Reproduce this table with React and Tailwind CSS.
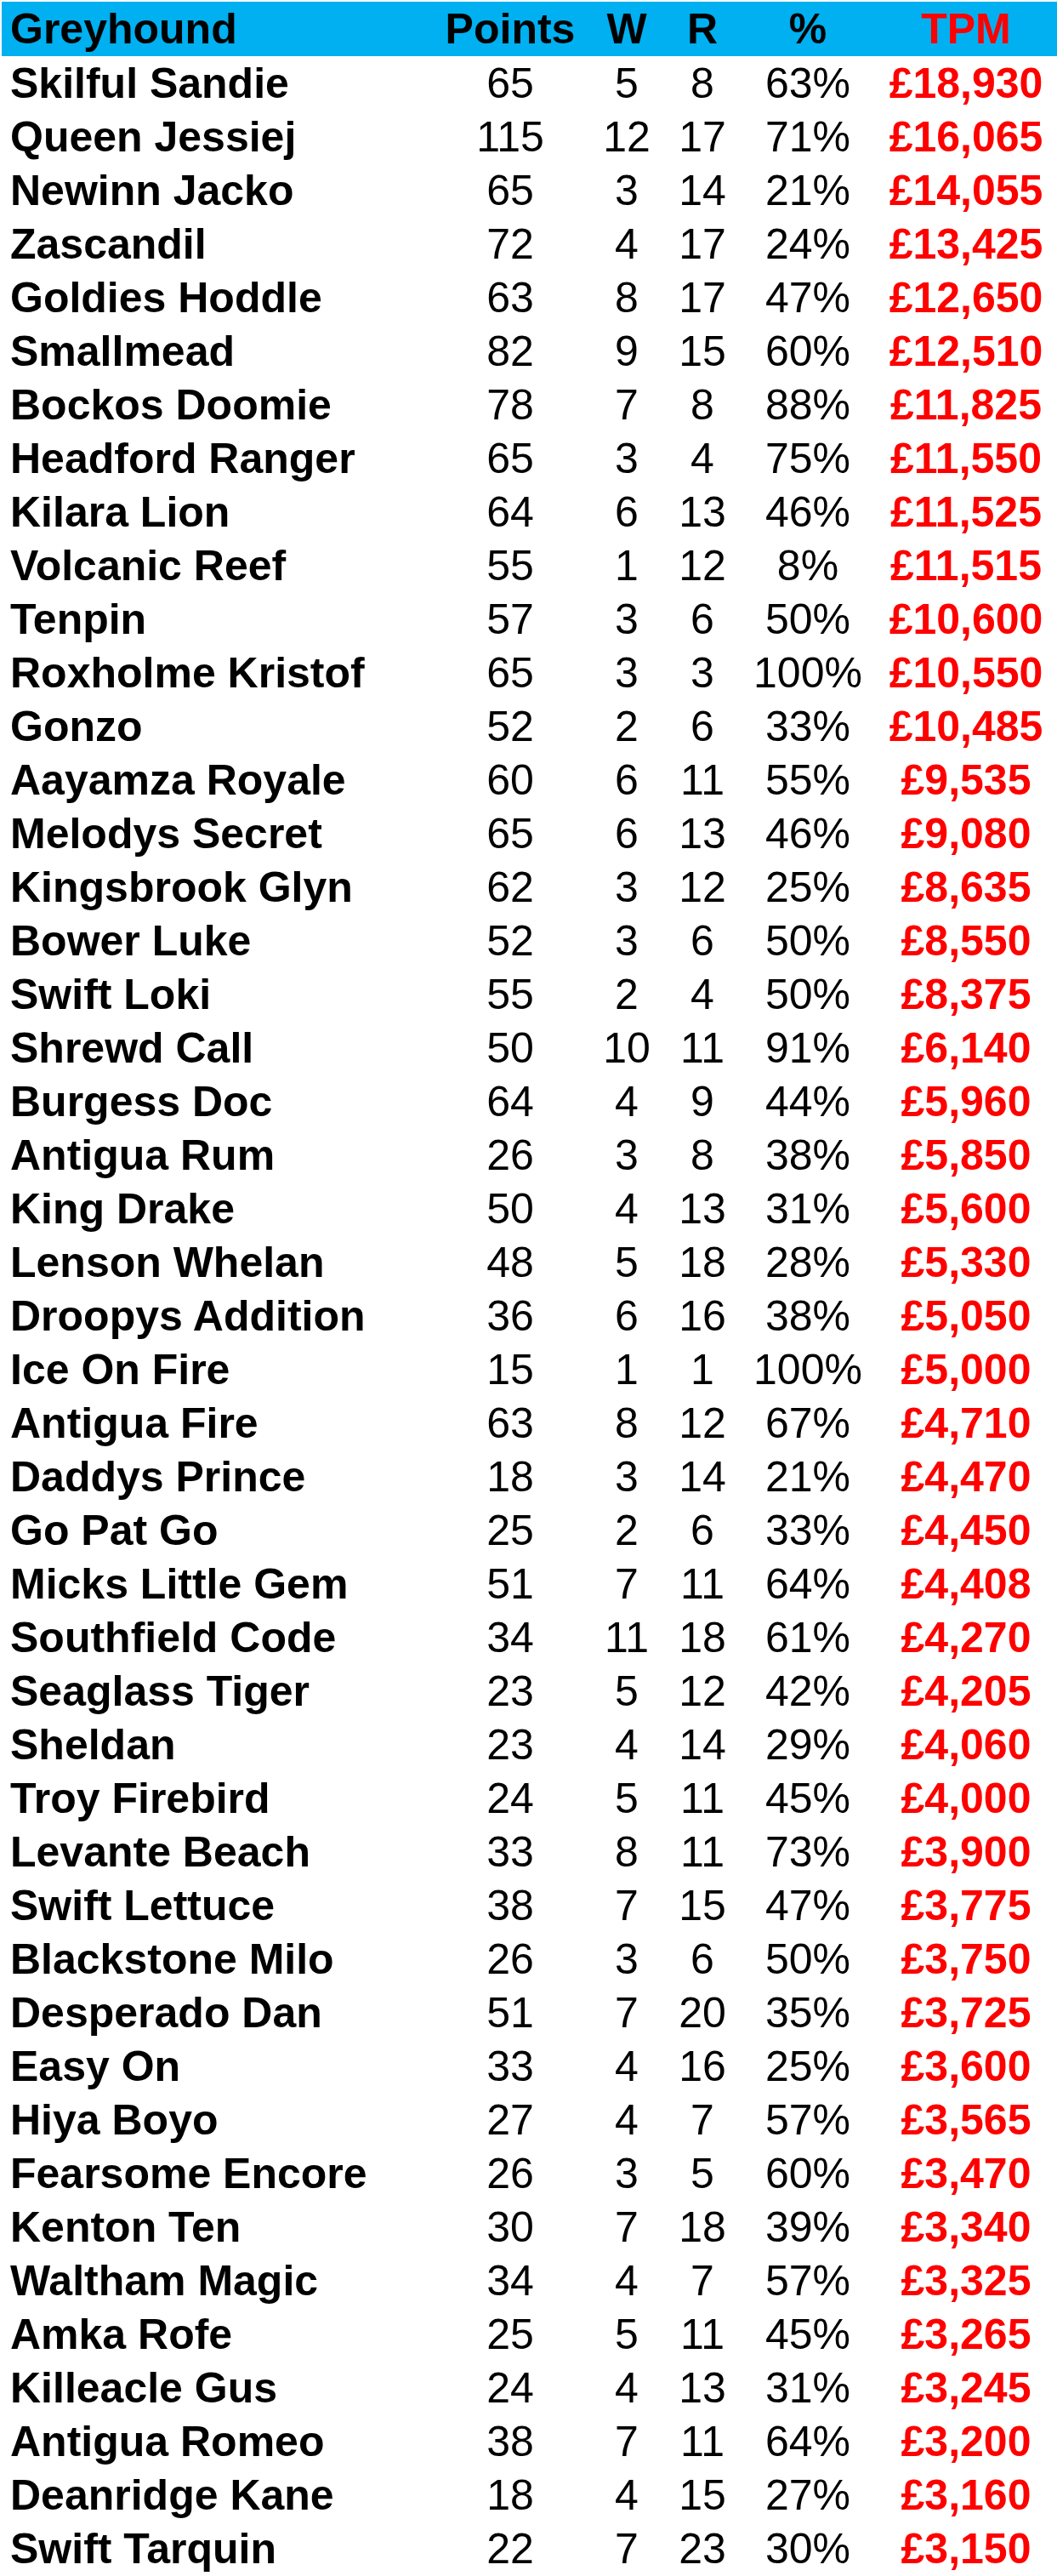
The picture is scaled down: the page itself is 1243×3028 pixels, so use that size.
import React from "react";

const rows = [
  ["Skilful Sandie", 65, 5, 8, "63%", "£18,930"],
  ["Queen Jessiej", 115, 12, 17, "71%", "£16,065"],
  ["Newinn Jacko", 65, 3, 14, "21%", "£14,055"],
  ["Zascandil", 72, 4, 17, "24%", "£13,425"],
  ["Goldies Hoddle", 63, 8, 17, "47%", "£12,650"],
  ["Smallmead", 82, 9, 15, "60%", "£12,510"],
  ["Bockos Doomie", 78, 7, 8, "88%", "£11,825"],
  ["Headford Ranger", 65, 3, 4, "75%", "£11,550"],
  ["Kilara Lion", 64, 6, 13, "46%", "£11,525"],
  ["Volcanic Reef", 55, 1, 12, "8%", "£11,515"],
  ["Tenpin", 57, 3, 6, "50%", "£10,600"],
  ["Roxholme Kristof", 65, 3, 3, "100%", "£10,550"],
  ["Gonzo", 52, 2, 6, "33%", "£10,485"],
  ["Aayamza Royale", 60, 6, 11, "55%", "£9,535"],
  ["Melodys Secret", 65, 6, 13, "46%", "£9,080"],
  ["Kingsbrook Glyn", 62, 3, 12, "25%", "£8,635"],
  ["Bower Luke", 52, 3, 6, "50%", "£8,550"],
  ["Swift Loki", 55, 2, 4, "50%", "£8,375"],
  ["Shrewd Call", 50, 10, 11, "91%", "£6,140"],
  ["Burgess Doc", 64, 4, 9, "44%", "£5,960"],
  ["Antigua Rum", 26, 3, 8, "38%", "£5,850"],
  ["King Drake", 50, 4, 13, "31%", "£5,600"],
  ["Lenson Whelan", 48, 5, 18, "28%", "£5,330"],
  ["Droopys Addition", 36, 6, 16, "38%", "£5,050"],
  ["Ice On Fire", 15, 1, 1, "100%", "£5,000"],
  ["Antigua Fire", 63, 8, 12, "67%", "£4,710"],
  ["Daddys Prince", 18, 3, 14, "21%", "£4,470"],
  ["Go Pat Go", 25, 2, 6, "33%", "£4,450"],
  ["Micks Little Gem", 51, 7, 11, "64%", "£4,408"],
  ["Southfield Code", 34, 11, 18, "61%", "£4,270"],
  ["Seaglass Tiger", 23, 5, 12, "42%", "£4,205"],
  ["Sheldan", 23, 4, 14, "29%", "£4,060"],
  ["Troy Firebird", 24, 5, 11, "45%", "£4,000"],
  ["Levante Beach", 33, 8, 11, "73%", "£3,900"],
  ["Swift Lettuce", 38, 7, 15, "47%", "£3,775"],
  ["Blackstone Milo", 26, 3, 6, "50%", "£3,750"],
  ["Desperado Dan", 51, 7, 20, "35%", "£3,725"],
  ["Easy On", 33, 4, 16, "25%", "£3,600"],
  ["Hiya Boyo", 27, 4, 7, "57%", "£3,565"],
  ["Fearsome Encore", 26, 3, 5, "60%", "£3,470"],
  ["Kenton Ten", 30, 7, 18, "39%", "£3,340"],
  ["Waltham Magic", 34, 4, 7, "57%", "£3,325"],
  ["Amka Rofe", 25, 5, 11, "45%", "£3,265"],
  ["Killeacle Gus", 24, 4, 13, "31%", "£3,245"],
  ["Antigua Romeo", 38, 7, 11, "64%", "£3,200"],
  ["Deanridge Kane", 18, 4, 15, "27%", "£3,160"],
  ["Swift Tarquin", 22, 7, 23, "30%", "£3,150"],
];

export default function App() {
  return (
    <div className="w-[1243px] bg-white text-black font-['Liberation_Sans',Arial,sans-serif] text-[50px] leading-none">
      {/* header */}
      <div className="pt-[2px] pl-[2px]">
        <div className="grid grid-cols-[518px_160px_114px_64px_184px_188px] h-[64px] items-center bg-[#00b0f0] font-bold">
          <div className="pl-[10px]">Greyhound</div>
          <div className="text-center">Points</div>
          <div className="text-center">W</div>
          <div className="text-center">R</div>
          <div className="text-center">%</div>
          <div className="text-center text-[#ff0000]">TPM</div>
        </div>
      </div>

      {/* rows */}
      {rows.map((r, i) => (
        <div
          key={i}
          className="grid grid-cols-[520px_160px_114px_64px_184px_188px] h-[63px] items-center"
        >
          <div className="pl-[12px] font-bold whitespace-nowrap">{r[0]}</div>
          <div className="text-center">{r[1]}</div>
          <div className="text-center">{r[2]}</div>
          <div className="text-center">{r[3]}</div>
          <div className="text-center">{r[4]}</div>
          <div className="text-center font-bold text-[#ff0000]">{r[5]}</div>
        </div>
      ))}
    </div>
  );
}
